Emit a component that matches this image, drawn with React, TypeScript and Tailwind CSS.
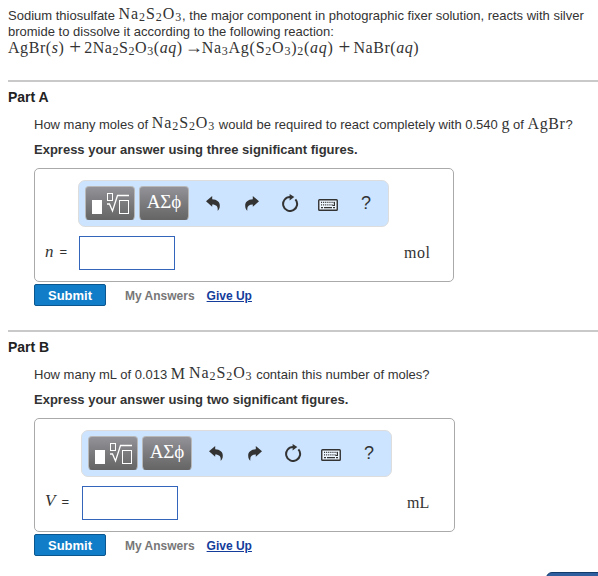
import type { ReactNode } from "react";

const serif = "font-['Liberation_Serif','Noto_Sans',serif]";

function Sub({ children }: { children: ReactNode }) {
  return <span className="relative top-[2px] text-[12px] leading-[12px]">{children}</span>;
}

function Math({ children, className = "" }: { children: ReactNode; className?: string }) {
  return (
    <span className={`${serif} relative inline-block shrink-0 whitespace-nowrap text-[16px] leading-[14px] ${className}`}>
      {children}
    </span>
  );
}

function Thiosulfate() {
  return (
    <>
      Na<Sub>2</Sub>S<Sub>2</Sub>O<Sub>3</Sub>
    </>
  );
}

function Plus() {
  return <span className="relative top-px mr-[3px] ml-[5px] text-[21px] leading-[10px] tracking-normal">+</span>;
}

function UndoIcon({ flip = false }: { flip?: boolean }) {
  return (
    <svg viewBox="0 0 14 15" className={`h-[15px] w-[14px] ${flip ? "-scale-x-100" : ""}`} fill="#333">
      <path d="M0 5.2 6.2 0v3.3c4.8.2 7.6 2.7 7.6 6.4 0 2.3-.9 4.1-2.2 5.1.7-4.1-1.2-6.2-5.4-6.2v2.2z" />
    </svg>
  );
}

function ResetIcon() {
  return (
    <svg viewBox="0 0 18 18" className="h-[18px] w-[18px]">
      <path d="M9 3A7 7 0 1 0 14.4 5.4" fill="none" stroke="#333" strokeWidth="2" />
      <path d="M8.6 0 13.3 3.1 8.6 6.4z" fill="#333" />
    </svg>
  );
}

function KeyboardIcon() {
  return (
    <svg viewBox="0 0 20 12" className="h-3 w-5" fill="none" stroke="#333">
      <rect x=".75" y=".75" width="18.5" height="10.5" rx=".8" fill="#eef6ff" strokeWidth="1.4" />
      <path d="M3 3.3h14M3 5.8h12" strokeWidth="1.2" strokeDasharray="1.1 1" />
      <path d="M3 8.6h2M6 8.6h8M15 8.6h2M16.4 3v3.5h-2" strokeWidth="1.2" />
    </svg>
  );
}

function TemplateIcon() {
  return (
    <svg viewBox="0 0 37 21" className="h-[21px] w-[37px]" fill="none" stroke="#fff">
      <rect x="0" y="7" width="10" height="14" fill="#fff" stroke="none" />
      <rect x="15.5" y=".5" width="5" height="7" strokeWidth="1" />
      <path d="M15 11h2.5l3 7L25.5 2.5h12" strokeWidth="1.3" />
      <rect x="27.5" y="7.5" width="9" height="13" />
    </svg>
  );
}

const toolButton =
  "flex h-[34px] w-[50px] items-center justify-center rounded-[4px] border border-[#b8b8b8] border-b-[#666] bg-linear-to-b from-[#929298] to-[#666] text-white";

function Toolbar() {
  return (
    <div className="flex h-[47px] w-[311px] items-center rounded-[7px] border border-[#ddd] bg-[#cce4ff] pb-px pl-[6px]">
      <button aria-label="Templates" className={toolButton}>
        <TemplateIcon />
      </button>
      <button className={`${toolButton} ml-1 ${serif} pb-px text-[19px] tracking-[-0.1px]`}>ΑΣϕ</button>
      <button aria-label="Undo" className="ml-[17px]"><UndoIcon /></button>
      <button aria-label="Redo" className="ml-[25px]"><UndoIcon flip /></button>
      <button aria-label="Reset" className="ml-[22px]"><ResetIcon /></button>
      <button aria-label="Keyboard" className="ml-[19px] mt-1"><KeyboardIcon /></button>
      <button className="ml-[23px] text-[18px] text-[#333]">?</button>
    </div>
  );
}

type PartProps = {
  title: string;
  question: ReactNode;
  instruction: string;
  variable: string;
  unit: string;
  wide?: boolean;
};

function Part({ title, question, instruction, variable, unit, wide = false }: PartProps) {
  return (
    <section className="ml-2 h-[250px] border-t-2 border-[#c9c9c9]">
      <h2 className="mt-[7px] text-[14px] leading-4 font-bold text-[#222]">{title}</h2>
      <div className="ml-[26px]">
        <div className="mt-3 flex h-4 items-baseline whitespace-pre leading-4">{question}</div>
        <p className="mt-[9px] text-[13px] leading-4 font-bold">{instruction}</p>
        <div className={`mt-[10px] h-[114px] rounded-[5px] border border-[#aaa] pt-[11px] ${wide ? "w-[421px]" : "w-[420px]"}`}>
          <div className={wide ? "ml-[46px]" : "ml-[43px]"}>
            <Toolbar />
          </div>
          <div className="mt-[9px] flex h-[34px] items-center pl-[10px]">
            <span className={`flex items-baseline ${wide ? "w-[37px]" : "w-[34px]"}`}>
              <Math className={wide ? "-top-px text-[17px] italic" : "text-[17px] italic"}>{variable}</Math>
              <span className="relative -top-px ml-[6px] text-[13px]">=</span>
            </span>
            <input className="h-[34px] w-24 border border-[#3366bb] bg-white" aria-label={variable} />
            <Math className={wide ? "ml-[229px]" : "ml-[229px] tracking-[0.5px]"}>{unit}</Math>
          </div>
        </div>
        <div className="mt-[2px] flex items-center text-[12px] font-bold">
          <button className="h-[22px] w-[72px] rounded-[2px] border border-[#0b568c] bg-[#117dc8] pt-px text-[13px] leading-5 text-white">
            Submit
          </button>
          <span className="ml-[19px] pt-[2px] text-[#777]">My Answers</span>
          <a href="#" className="ml-3 pt-[2px] text-[#143c9b] underline">Give Up</a>
        </div>
      </div>
    </section>
  );
}

export default function App() {
  return (
    <main className="h-[576px] w-[598px] overflow-hidden bg-white font-['Liberation_Sans',sans-serif] text-[13px] text-[#333]">
      <div className="h-20 pt-2 pl-2">
        <div className="flex h-4 items-baseline whitespace-pre leading-4">
          <span>Sodium thiosulfate </span>
          <Math className="-top-px tracking-[0.9px]"><Thiosulfate /></Math>
          <span>, the major component in photographic fixer solution, reacts with silver</span>
        </div>
        <p className="leading-4">bromide to dissolve it according to the following reaction:</p>
        <div className="flex h-4 items-baseline">
          <Math className="top-px tracking-[0.55px]">
            AgBr(<i>s</i>)<Plus />2<Thiosulfate />(<i>aq</i>)
            <span className="ml-[2px] inline-block w-[17px] text-[18px] leading-[10px] tracking-normal">→</span>
            <span className="tracking-[0.75px]">
              Na<Sub>3</Sub>Ag(S<Sub>2</Sub>O<Sub>3</Sub>)<Sub>2</Sub>(<i>aq</i>)
            </span>
            <Plus />NaBr(<i>aq</i>)
          </Math>
        </div>
      </div>

      <Part
        title="Part A"
        question={
          <>
            <span>How many moles of </span>
            <Math className="-top-px tracking-[0.9px]"><Thiosulfate /></Math>
            <span> would be required to react completely with 0.540 </span>
            <Math>g</Math>
            <span> of </span>
            <Math className="tracking-[0.6px]">AgBr</Math>
            <span>?</span>
          </>
        }
        instruction="Express your answer using three significant figures."
        variable="n"
        unit="mol"
      />

      <Part
        title="Part B"
        question={
          <>
            <span>How many mL of 0.013 </span>
            <Math>M</Math>
            <Math className="-top-px ml-1 tracking-[0.9px]"><Thiosulfate /></Math>
            <span> contain this number of moles?</span>
          </>
        }
        instruction="Express your answer using two significant figures."
        variable="V"
        unit="mL"
        wide
      />

      {/* continue button, cut off by the bottom edge */}
      <div className="ml-[546px] mt-[-8px] h-8 w-24 rounded-[6px] border border-[#123a6b] bg-[#2f5f9f]" />
    </main>
  );
}
